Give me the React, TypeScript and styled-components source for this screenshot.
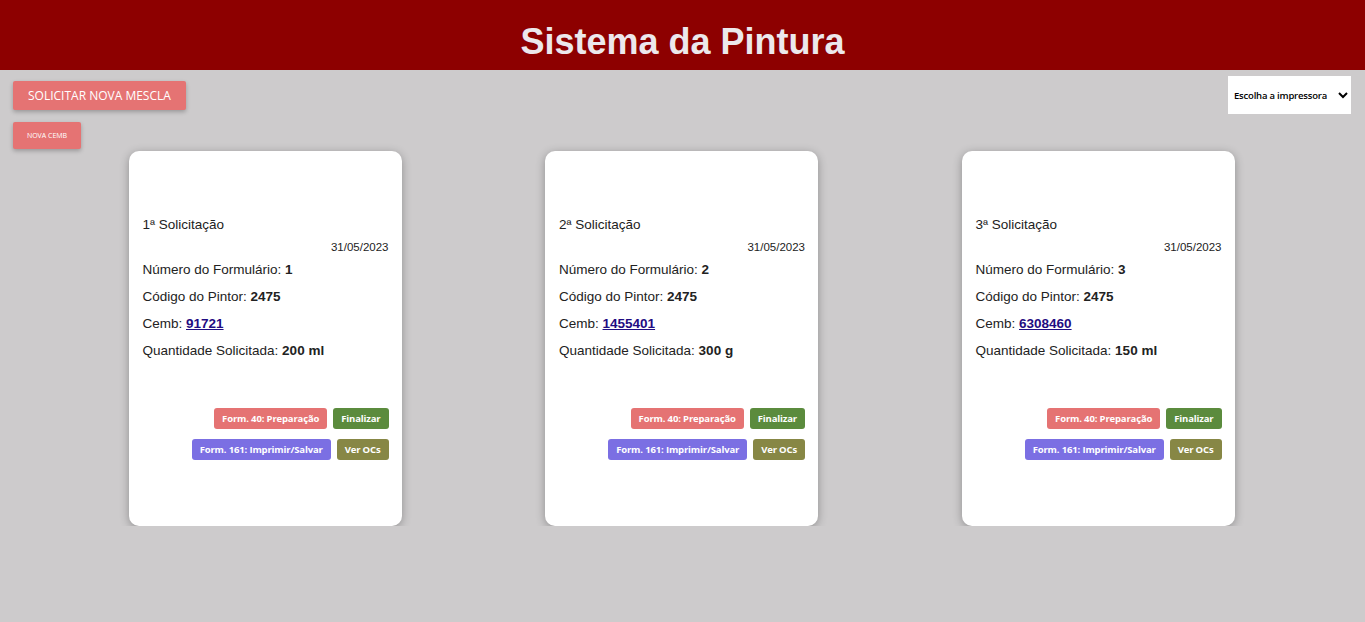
import React from 'react'
import styled, { createGlobalStyle } from 'styled-components'

type Solicitacao = {
  id: number
  data: string
  formulario: number
  pintor: number
  cemb: string
  quantidade: string
}

const solicitacoes: Solicitacao[] = [
  { id: 1, data: '31/05/2023', formulario: 1, pintor: 2475, cemb: '91721', quantidade: '200 ml' },
  { id: 2, data: '31/05/2023', formulario: 2, pintor: 2475, cemb: '1455401', quantidade: '300 g' },
  { id: 3, data: '31/05/2023', formulario: 3, pintor: 2475, cemb: '6308460', quantidade: '150 ml' },
]

const App: React.FC = () => {
  return (
    <>
      <GlobalStyle />
      <Header>
        <Title>Sistema da Pintura</Title>
      </Header>
      <Toolbar>
        <LeftActions>
          <ActionButton>SOLICITAR NOVA MESCLA</ActionButton>
          <SmallButton>NOVA CEMB</SmallButton>
        </LeftActions>
        <PrinterSelect defaultValue="">
          <option value="">Escolha a impressora</option>
        </PrinterSelect>
      </Toolbar>
      <CardList>
        {solicitacoes.map((s) => (
          <Card key={s.id}>
            <CardTitle>{s.id}ª Solicitação</CardTitle>
            <CardDate>{s.data}</CardDate>
            <InfoList>
              <InfoLine>
                Número do Formulário: <b>{s.formulario}</b>
              </InfoLine>
              <InfoLine>
                Código do Pintor: <b>{s.pintor}</b>
              </InfoLine>
              <InfoLine>
                Cemb: <CembLink href="#">{s.cemb}</CembLink>
              </InfoLine>
              <InfoLine>
                Quantidade Solicitada: <b>{s.quantidade}</b>
              </InfoLine>
            </InfoList>
            <ButtonRows>
              <ButtonRow>
                <CardButton color="#e57373">Form. 40: Preparação</CardButton>
                <CardButton color="#5b8b3d">Finalizar</CardButton>
              </ButtonRow>
              <ButtonRow>
                <CardButton color="#7b6fe3">Form. 161: Imprimir/Salvar</CardButton>
                <CardButton color="#878745">Ver OCs</CardButton>
              </ButtonRow>
            </ButtonRows>
          </Card>
        ))}
      </CardList>
    </>
  )
}

const GlobalStyle = createGlobalStyle`
  html, body {
    margin: 0;
    padding: 0;
    background-color: #cdcbcc;
    font-family: 'Liberation Sans', Arial, sans-serif;
    min-height: 100%;
  }
`

const Header = styled.header`
  height: 70px;
  background-color: #8d0000;
  display: flex;
  justify-content: center;
  align-items: center;
`

const Title = styled.h1`
  margin: 14px 0 0;
  font-size: 36px;
  font-weight: bold;
  color: #ece8ec;
`

const Toolbar = styled.div`
  display: flex;
  justify-content: space-between;
  align-items: flex-start;
  padding: 6px 14px 0 13px;
`

const LeftActions = styled.div`
  display: flex;
  flex-direction: column;
  align-items: flex-start;
  gap: 12px;
  padding-top: 5px;
`

const ActionButton = styled.button`
  height: 29px;
  padding: 0 15px;
  background-color: #e57373;
  color: #fff;
  border: none;
  border-radius: 2px;
  font-family: 'Open Sans', 'Noto Sans', sans-serif;
  font-size: 12px;
  box-shadow: 0 2px 4px rgba(0, 0, 0, 0.25);
  cursor: pointer;
`

const SmallButton = styled(ActionButton)`
  height: 27px;
  width: 68px;
  padding: 0;
  font-size: 7px;
`

const PrinterSelect = styled.select`
  width: 123px;
  height: 38px;
  background: #fff;
  border: none;
  border-radius: 0;
  font-family: 'Open Sans', 'Noto Sans', sans-serif;
  font-size: 9.5px;
  font-weight: 600;
  letter-spacing: -0.2px;
  color: #000;
  padding: 0 0 0 2px;
`

const CardList = styled.div`
  display: flex;
  justify-content: center;
  gap: 143.5px;
  margin-top: 2px;
  padding-right: 2px;
`

const Card = styled.div`
  width: 273px;
  height: 375px;
  box-sizing: border-box;
  background: #fff;
  border-radius: 10px;
  box-shadow: 0 2px 10px rgba(0, 0, 0, 0.3);
  padding: 66px 13px 0 14px;
  display: flex;
  flex-direction: column;
  font-size: 13.5px;
  color: #222;
`

const CardTitle = styled.div`
  font-size: 13.5px;
  line-height: 16px;
`

const CardDate = styled.div`
  text-align: right;
  font-size: 11.5px;
  margin-top: 7px;
  line-height: 14px;
`

const InfoList = styled.div`
  display: flex;
  flex-direction: column;
  gap: 10px;
  margin-top: 7px;
`

const InfoLine = styled.div`
  font-size: 13.5px;
  line-height: 17px;
`

const CembLink = styled.a`
  color: #1f0c82;
  font-weight: bold;
`

const ButtonRows = styled.div`
  display: flex;
  flex-direction: column;
  align-items: flex-end;
  gap: 10px;
  margin-top: 49px;
`

const ButtonRow = styled.div`
  display: flex;
  gap: 6px;
`

const CardButton = styled.button<{ color: string }>`
  height: 21px;
  padding: 0 8px;
  background-color: ${(props) => props.color};
  color: #fff;
  border: none;
  border-radius: 3px;
  font-family: 'Open Sans', 'Noto Sans', sans-serif;
  font-size: 9.5px;
  font-weight: 700;
  letter-spacing: -0.15px;
  cursor: pointer;
`

export default App
